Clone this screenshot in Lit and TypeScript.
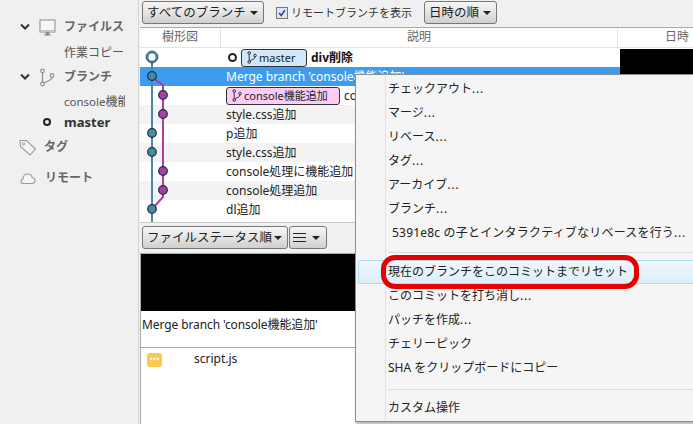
import { LitElement, html, css, svg } from "lit";
import { customElement } from "lit/decorators.js";

const chevron = html`<svg class="chev" width="10" height="8" viewBox="0 0 10 8"><path d="M1 1.5 5 5.5 9 1.5" fill="none" stroke="#333" stroke-width="2"/></svg>`;
const monitor = html`<svg width="17" height="17" viewBox="0 0 17 17"><rect x="1" y="1" width="15" height="12" fill="#f6f6f6" stroke="#8a8a8a"/><rect x="1.5" y="11" width="14" height="2" fill="#c4c4c4"/><path d="M5 16h7M7 13.5h3V16H7z" fill="#8a8a8a" stroke="#8a8a8a" stroke-width=".8"/></svg>`;
const branch = html`<svg width="17" height="19" viewBox="0 0 17 19"><g fill="none" stroke="#8f8f8f" stroke-width="1.2"><circle cx="3.5" cy="2.8" r="1.8"/><circle cx="3.5" cy="16" r="1.8"/><circle cx="13" cy="7.5" r="1.8"/><path d="M3.5 4.6v9.6M13 9.3c0 3-4 3.5-8 5.5"/></g></svg>`;
const tag = html`<svg width="18" height="17" viewBox="0 0 18 17"><path d="M1 1.5h6.5l9 8.5-5.5 6L1.5 7.5z" fill="#f3f3f3" stroke="#9a9a9a" stroke-width="1.1"/><circle cx="4.6" cy="4.8" r="1.2" fill="none" stroke="#9a9a9a"/></svg>`;
const cloud = html`<svg width="16" height="14" viewBox="0 0 16 14"><path d="M4 12.5H3.2C1.8 12.5 1 11.4 1 10.2 1 9 1.9 8 3 8c.2-3 2.3-5 4.8-5 2.3 0 4 1.6 4.4 3.7 1.6 0 2.8 1.3 2.8 2.9 0 1.7-1.2 2.9-2.8 2.9z" fill="#f5f5f5" stroke="#9a9a9a" stroke-width="1.1"/></svg>`;
const mini = html`<svg class="mini" width="10" height="13" viewBox="0 0 10 13"><g fill="none" stroke="#333" stroke-width="1"><circle cx="2.2" cy="2" r="1.3"/><circle cx="2.2" cy="11" r="1.3"/><circle cx="8" cy="4.5" r="1.3"/><path d="M2.2 3.3v6.4M8 5.8c0 2.5-3 2.4-5 4.2"/></g></svg>`;
const arrow = html`<span class="arrow"></span>`;
const dots = html`<span class="dots">...</span>`;

const teal = "#4a88a6";
const mag = "#a93ea3";
const node = (x: number, y: number, c: string) =>
  svg`<circle cx=${x} cy=${y} r="4.3" fill=${c} stroke="#17303c" stroke-width="1.2"/>`;

const graph = html`<svg class="graph" width="40" height="175" viewBox="140 48 40 175">
  <path d="M152 57V223" stroke=${teal} stroke-width="2" fill="none"/>
  <path d="M154 79 163 85V197L152 209" stroke=${mag} stroke-width="2" fill="none"/>
  <circle cx="152" cy="57" r="4.6" fill="#fff" stroke=${teal} stroke-width="2.2"/>
  <circle cx="152" cy="57" r="5.9" fill="none" stroke="#17303c" stroke-width=".8"/>
  ${node(152, 76, teal)}${node(163, 95, mag)}${node(163, 114, mag)}${node(152, 133, teal)}
  ${node(152, 152, teal)}${node(163, 171, mag)}${node(163, 190, mag)}${node(152, 209, teal)}
</svg>`;

@customElement("app-root")
export class AppRoot extends LitElement {
  static styles = css`
    :host {
      display: flex;
      position: relative;
      width: 693px;
      height: 424px;
      overflow: hidden;
      background: #f0f0f0;
      color: #222;
      font: 12px/16px "Noto Sans", "Noto Sans CJK JP", sans-serif;
    }
    .side {
      width: 139px;
      flex: none;
      box-sizing: border-box;
      border-right: 1px solid #d4d4d4;
      padding-top: 17px;
      color: #555;
    }
    .srow {
      display: flex;
      align-items: center;
      height: 20px;
      white-space: nowrap;
    }
    .srow .clip {
      display: block;
      overflow: hidden;
      width: 61px;
    }
    .lat { font-size: 11.5px; }
    .chev { margin: 0 9px 0 20px; flex: none; }
    .head { color: #666; }
    .head svg:not(.chev) { margin-right: 8px; flex: none; }
    .head .clip { font-weight: 700; }
    .sub { padding-left: 64px; }
    .r2 { margin-top: 6px; }
    .r3 { margin-top: 4px; }
    .r4 { margin-top: 5px; }
    .mast { color: #333; font-weight: 700; font-size: 13px; position: relative; }
    .dot {
      position: absolute;
      left: 43px;
      top: 6px;
      width: 4px;
      height: 4px;
      border: 2px solid #222;
      border-radius: 50%;
    }
    .tag { padding-left: 19px; margin-top: 5px; font-weight: 700; color: #666; }
    .tag svg { margin-right: 7px; }
    .rem { padding-left: 20px; margin-top: 11px; font-weight: 700; color: #666; }
    .rem svg { margin-right: 9px; }
    .main {
      flex: 1;
      min-width: 0;
      display: flex;
      flex-direction: column;
      padding-left: 1px;
    }
    .tools {
      height: 27px;
      box-sizing: border-box;
      display: flex;
      align-items: flex-start;
      padding: 1px 0 0 2px;
      flex: none;
    }
    .btn {
      height: 23px;
      box-sizing: border-box;
      display: inline-flex;
      align-items: center;
      justify-content: space-between;
      padding: 0 5px 0 4px;
      border: 1px solid #777;
      border-radius: 3px;
      background: linear-gradient(#f6f6f6, #e4e4e4 50%, #cfcfcf);
      color: #222;
      font-size: 12.5px;
      white-space: nowrap;
    }
    .arrow {
      width: 0;
      height: 0;
      border: 4px solid transparent;
      border-top-color: #222;
      border-bottom: 0;
      flex: none;
    }
    .b1 { width: 122px; }
    .b2 { width: 73px; margin-left: 12px; }
    .b3 { width: 146px; }
    .b4 { width: 38px; margin-left: 1px; padding: 0 6px 0 3px; }
    .chk {
      display: flex;
      align-items: center;
      height: 23px;
      margin-left: 12px;
      color: #333;
      font-size: 11px;
      white-space: nowrap;
    }
    .box {
      width: 12px;
      height: 12px;
      box-sizing: border-box;
      margin-right: 3px;
      border: 1px solid #777;
      background: #dfe3f5;
      display: block;
    }
    .table {
      position: relative;
      height: 194px;
      flex: none;
      background: #fff;
      border-top: 1px solid #aaa;
      overflow: hidden;
    }
    .thead {
      display: grid;
      grid-template-columns: 81px 397px 1fr;
      height: 19px;
      color: #666;
      text-align: center;
      border-bottom: 1px solid #e4e4e4;
    }
    .thead > div { border-right: 1px solid #e4e4e4; line-height: 18px; }
    .thead > .when { text-align: left; padding-left: 47px; border-right: 0; }
    .row {
      display: grid;
      grid-template-columns: 86px 394px 1fr;
      height: 19px;
      line-height: 19px;
      white-space: nowrap;
    }
    .row.alt { background: #f3f3f3; }
    .row.sel { background: #3d9cee; color: #fff; }
    .msg { display: flex; align-items: center; overflow: hidden; }
    .date { background: #000; }
    .first { margin-top: 1px; }
    .ring {
      width: 5px;
      height: 5px;
      border: 2px solid #222;
      border-radius: 50%;
      margin: 0 4px 0 2px;
      flex: none;
    }
    .pill {
      display: inline-flex;
      align-items: center;
      height: 18px;
      box-sizing: border-box;
      border: 1px solid #333;
      border-radius: 3px;
      padding: 0 2px 0 5px;
      gap: 2px;
      margin-right: 4px;
      color: #222;
      font-size: 11px;
      flex: none;
    }
    .mini { flex: none; }
    .blue { background: #cfe8fb; width: 66px; }
    .pink { background: #fbcdf6; width: 114px; }
    .b { font-weight: 700; color: #111; }
    .graph { position: absolute; left: 0; top: 20px; }
    .t2 {
      height: 31px;
      box-sizing: border-box;
      flex: none;
      display: flex;
      align-items: flex-start;
      padding: 3px 0 0 2px;
      border-top: 1px solid #c8c8c8;
    }
    .detail {
      flex: 1;
      min-height: 0;
      background: #fff;
      border-top: 1px solid #aaa;
      border-left: 1px solid #aaa;
      display: flex;
      flex-direction: column;
    }
    .black { height: 57px; background: #000; flex: none; }
    .cmsg {
      height: 37px;
      flex: none;
      box-sizing: border-box;
      border-bottom: 1px solid #aaa;
      padding: 6px 0 0 1px;
      letter-spacing: -0.1px;
      white-space: nowrap;
    }
    .file { display: flex; align-items: center; height: 22px; padding-left: 6px; }
    .badge {
      width: 15px;
      height: 14px;
      margin-top: 1px;
      border-radius: 3px;
      background: #fac94f;
      color: #fff;
      font-size: 9px;
      line-height: 11px;
      text-align: center;
      margin-right: 32px;
      flex: none;
    }
    .menu {
      position: absolute;
      left: 355px;
      top: 74px;
      width: 345px;
      height: 348px;
      box-sizing: border-box;
      padding-top: 2px;
      background: #f5f5f5;
      border: 1px solid #8e8e8e;
      box-shadow: 1px 2px 2px rgba(0, 0, 0, 0.3);
      color: #222;
    }
    .gutter {
      position: absolute;
      left: 29px;
      top: 1px;
      bottom: 1px;
      width: 1px;
      background: #e2e2e2;
    }
    .item {
      height: 24px;
      line-height: 24px;
      padding-left: 32px;
      white-space: nowrap;
    }
    .dots { letter-spacing: 0.8px; }
    .item.ind { padding-left: 36px; letter-spacing: 0.2px; }
    .item.hi {
      margin-left: 2px;
      padding-left: 29px;
      box-sizing: border-box;
      line-height: 22px;
      border: 1px solid #b6d9ec;
      border-radius: 2px;
      background: linear-gradient(#eef7fc, #ddeef8);
    }
    .sep { height: 1px; background: #dcdcdc; margin: 0 0 0 32px; }
    .s1 { margin-top: 7px; margin-bottom: 7px; }
    .s2 { margin-top: 9px; margin-bottom: 6px; }
    .red {
      position: absolute;
      left: 381px;
      top: 255px;
      width: 258px;
      height: 34px;
      box-sizing: border-box;
      border: 5px solid #e60000;
      border-radius: 14px;
    }
  `;

  render() {
    return html`
      <aside class="side">
        <div class="srow head">${chevron}${monitor}<span class="clip">ファイルステータス</span></div>
        <div class="srow sub r2"><span class="clip">作業コピー</span></div>
        <div class="srow head r3">${chevron}${branch}<span class="clip">ブランチ</span></div>
        <div class="srow sub r4"><span class="clip"><span class="lat">console</span>機能追加</span></div>
        <div class="srow sub mast"><span class="dot"></span>master</div>
        <div class="srow tag">${tag}タグ</div>
        <div class="srow rem">${cloud}リモート</div>
      </aside>
      <section class="main">
        <div class="tools">
          <span class="btn b1">すべてのブランチ ${arrow}</span>
          <label class="chk"><svg class="box" viewBox="0 0 12 12"><path d="M2.5 6l2.5 3L9.5 2.5" fill="none" stroke="#2a3aa0" stroke-width="1.8"/></svg>リモートブランチを表示</label>
          <span class="btn b2">日時の順 ${arrow}</span>
        </div>
        <div class="table">
          <div class="thead"><div>樹形図</div><div>説明</div><div class="when">日時</div></div>
          <div class="row">
            <div></div>
            <div class="msg"><span class="ring"></span><span class="pill blue">${mini}master</span><span class="b">div削除</span></div>
            <div class="date first"></div>
          </div>
          <div class="row sel">
            <div></div>
            <div class="msg">Merge branch 'console機能追加'</div>
            <div class="date"></div>
          </div>
          <div class="row"><div></div><div class="msg"><span class="pill pink">${mini}console機能追加</span>console処理追加</div></div>
          <div class="row alt"><div></div><div class="msg">style.css追加</div></div>
          <div class="row"><div></div><div class="msg">p追加</div></div>
          <div class="row alt"><div></div><div class="msg">style.css追加</div></div>
          <div class="row"><div></div><div class="msg">console処理に機能追加</div></div>
          <div class="row alt"><div></div><div class="msg">console処理追加</div></div>
          <div class="row"><div></div><div class="msg">dl追加</div></div>
          ${graph}
        </div>
        <div class="t2">
          <span class="btn b3">ファイルステータス順 ${arrow}</span>
          <span class="btn b4"><svg width="13" height="11" viewBox="0 0 13 11"><path d="M0 1.5h13M0 5.5h13M0 9.5h13" stroke="#222"/></svg>${arrow}</span>
        </div>
        <div class="detail">
          <div class="black"></div>
          <div class="cmsg">Merge branch 'console機能追加'</div>
          <div class="file"><span class="badge">•••</span>script.js</div>
        </div>
      </section>
      <div class="menu">
        <div class="gutter"></div>
        <div class="item">チェックアウト${dots}</div>
        <div class="item">マージ${dots}</div>
        <div class="item">リベース${dots}</div>
        <div class="item">タグ${dots}</div>
        <div class="item">アーカイブ${dots}</div>
        <div class="item">ブランチ${dots}</div>
        <div class="item ind">5391e8c の子とインタラクティブなリベースを行う${dots}</div>
        <div class="sep s1"></div>
        <div class="item hi">現在のブランチをこのコミットまでリセット</div>
        <div class="item">このコミットを打ち消し${dots}</div>
        <div class="item">パッチを作成${dots}</div>
        <div class="item">チェリーピック</div>
        <div class="item">SHA をクリップボードにコピー</div>
        <div class="sep s2"></div>
        <div class="item">カスタム操作</div>
      </div>
      <div class="red"></div>
    `;
  }
}
